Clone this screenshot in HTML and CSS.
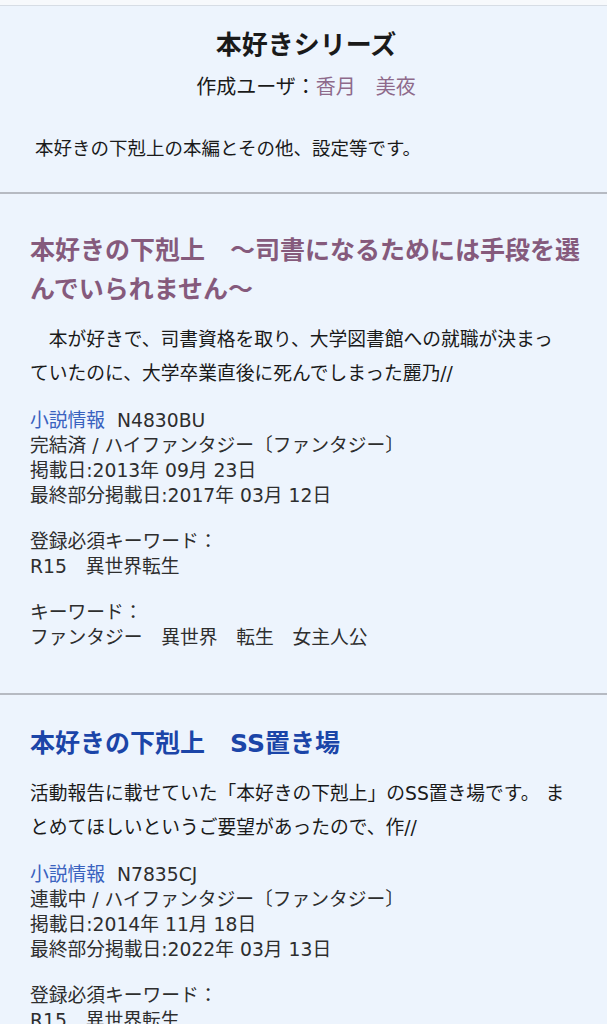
FILE: index.html
```html
<!DOCTYPE html>
<html lang="ja">

<head>
    <meta charset="utf-8">
    <title>本好きシリーズ</title>
    <meta name="viewport" content="width=device-width, initial-scale=1.0">
    <link rel="stylesheet" href="styles.css">
</head>

<body>
    <div class="page">
        <header class="series-head">
            <h1>本好きシリーズ</h1>
            <p class="author">作成ユーザ：<a href="#">香月　美夜</a></p>
            <p class="desc">本好きの下剋上の本編とその他、設定等です。</p>
        </header>

        <section class="novel first">
            <h2><a href="#" class="visited">本好きの下剋上　～司書になるためには手段を選んでいられません～</a></h2>
            <p class="summary">　本が好きで、司書資格を取り、大学図書館への就職が決まっていたのに、大学卒業直後に死んでしまった麗乃//</p>
            <div class="info">
                <p><a href="#" class="info-link">小説情報</a>&nbsp;&nbsp;N4830BU<br>
                    完結済 / ハイファンタジー〔ファンタジー〕<br>
                    掲載日:2013年 09月 23日<br>
                    最終部分掲載日:2017年 03月 12日</p>
                <p>登録必須キーワード：<br>R15　異世界転生</p>
                <p>キーワード：<br>ファンタジー　異世界　転生　女主人公</p>
            </div>
        </section>

        <section class="novel">
            <h2><a href="#">本好きの下剋上　SS置き場</a></h2>
            <p class="summary">活動報告に載せていた「本好きの下剋上」のSS置き場です。 まとめてほしいというご要望があったので、作//</p>
            <div class="info">
                <p><a href="#" class="info-link">小説情報</a>&nbsp;&nbsp;N7835CJ<br>
                    連載中 / ハイファンタジー〔ファンタジー〕<br>
                    掲載日:2014年 11月 18日<br>
                    最終部分掲載日:2022年 03月 13日</p>
                <p>登録必須キーワード：<br>R15　異世界転生</p>
                <p>キーワード：<br>ファンタジー　異世界　転生　女主人公</p>
            </div>
        </section>
    </div>
</body>

</html>
```

FILE: styles.css
```css
:root {
    --bg-color: #edf4fd;
    --top-color: #f7f9fc;
    --fg-color: #1a1a1a;
    --info-color: #2e2e2e;
    --rule-color: #b6bac2;
    --link-color: #1b45a8;
    --visited-color: #855a7c;
    --author-color: #8e6a8b;
    --info-link-color: #3a62bf;
}

* {
    margin: 0;
    padding: 0;
    box-sizing: border-box;
}

html,
body {
    font-family: 'DejaVu Sans', 'Noto Sans CJK JP', sans-serif;
    color: var(--fg-color);
    background-color: var(--top-color);
}

body {
    padding-top: 5px;
}

a {
    text-decoration: none;
}

.page {
    background-color: var(--bg-color);
    border-top: 1px solid #d7dde5;
    min-height: 1019px;
}

.series-head {
    padding: 21px 30px 28px 35px;
    border-bottom: 2px solid var(--rule-color);
}

.series-head h1 {
    font-size: 26px;
    line-height: 36px;
    font-weight: bold;
    text-align: center;
}

.series-head .author {
    margin-top: 9px;
    font-size: 20px;
    line-height: 30px;
    text-align: center;
}

.series-head .author a {
    color: var(--author-color);
}

.series-head .desc {
    margin-top: 32px;
    font-size: 18.5px;
    line-height: 30px;
}

.novel {
    padding: 29px 37px 43px 30px;
    border-bottom: 2px solid var(--rule-color);
}

.novel.first {
    padding-top: 37px;
}

/* titles run a little wider than the summary text */
.novel h2 {
    margin-right: -12px;
    font-size: 25px;
    line-height: 39px;
    font-weight: bold;
}

.novel h2 a {
    color: var(--link-color);
}

.novel h2 a.visited {
    color: var(--visited-color);
}

.summary {
    margin-top: 14px;
    font-size: 18.75px;
    line-height: 34px;
}

.info {
    margin-top: 17px;
    font-size: 18.75px;
    line-height: 25px;
    color: var(--info-color);
}

.info p + p {
    margin-top: 21px;
}

.info-link {
    color: var(--info-link-color);
}
```
